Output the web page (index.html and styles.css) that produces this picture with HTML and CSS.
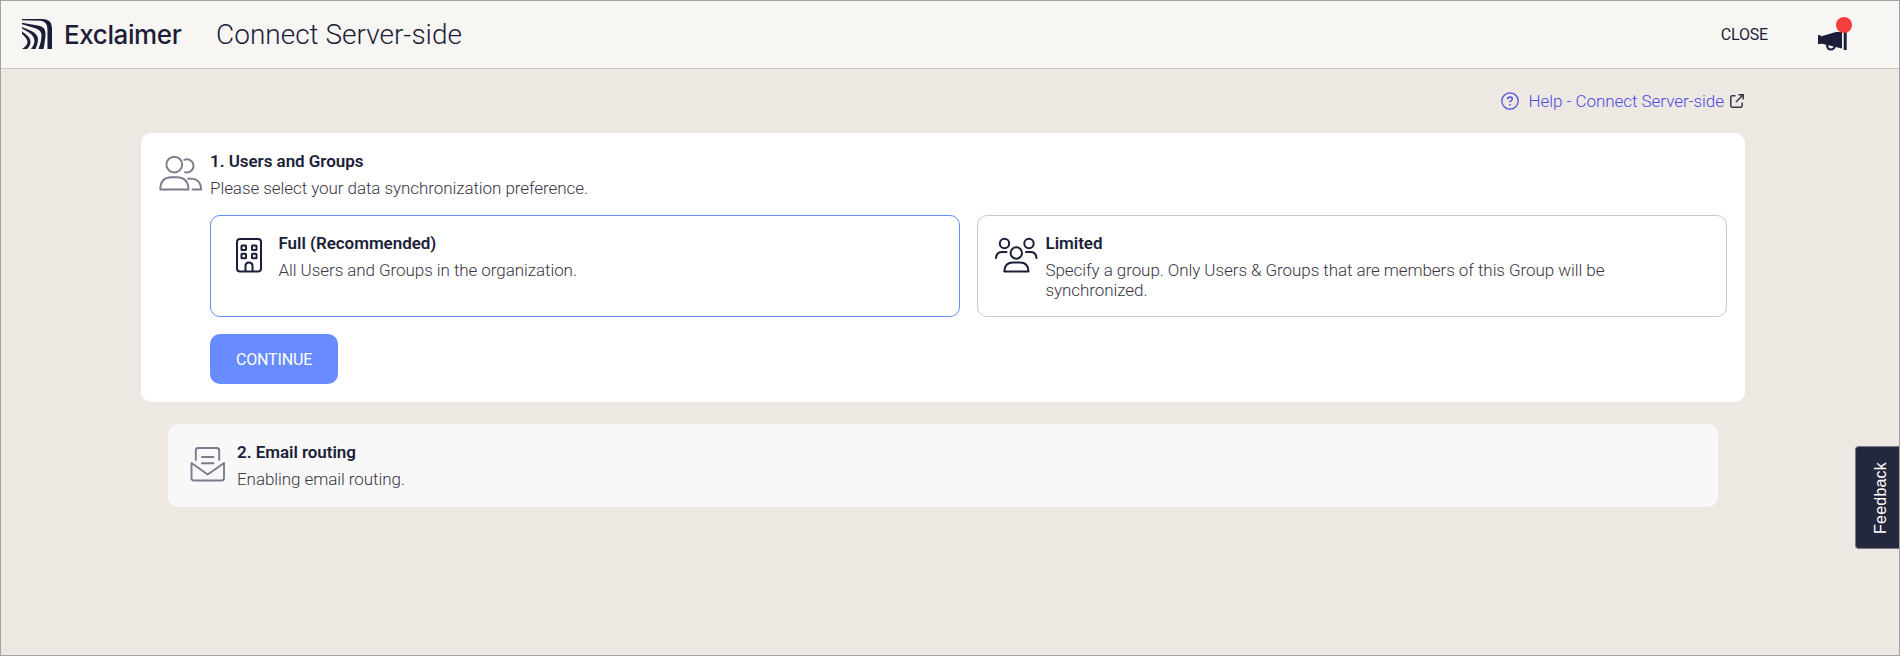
FILE: index.html
```html
<!DOCTYPE html>
<html lang="en">
<head>
<meta charset="utf-8">
<title>Connect Server-side</title>
<link rel="stylesheet" href="styles.css">
</head>
<body>
<div class="app">
  <header class="topbar">
    <svg class="logo-mark" viewBox="0 0 30 30" fill="#1b1e38">
      <path d="M0 0H21Q30 .5 30 9V30H25.500V11Q25.500 2.500 19 1.700L0 1.300Z"/>
      <path d="M0 3.800L17 6.800Q23.500 8.300 23.500 14Q23.500 20 21.500 30H16.500Q19.500 22 19.500 16.500Q19.500 11.500 14 9.500L0 5.200Z"/>
      <path d="M0 8L9.500 12Q16 15.500 16 20.500Q16 24.500 13.500 30H9Q12.500 25.500 12.500 21.500Q12 17 7 13.500L0 9.500Z"/>
      <path d="M0 12.500Q8.500 18 8.500 22.500Q8.500 26.500 5 30H0Q5.500 26.500 5.500 23Q5.500 19.500 0 15Z"/>
    </svg>
    <span class="logo-name">Exclaimer</span>
    <h1 class="title">Connect Server-side</h1>
    <button class="close">CLOSE</button>
    <div class="news">
      <svg class="horn" viewBox="0 0 30 20" fill="#1b1e38">
        <path d="M0 3H2.500V4.500L18 0H24V16.500L3 11.500V12H0Z"/>
        <path d="M9 12.500Q9 17.500 13 17.500Q16.300 17.500 16.700 14" fill="none" stroke="#1b1e38" stroke-width="2.200"/>
        <path d="M25.700 0H28.700V18H25.700Z"/>
      </svg>
      <span class="news-dot"></span>
    </div>
  </header>
  <main class="content">
    <a class="help">
      <svg class="help-mark" viewBox="0 0 18 18" fill="none" stroke="#4b4be0" stroke-width="1.200"><circle cx="9" cy="9" r="8.200"/><path d="M6.600 7.200Q6.600 5 9 5Q11.300 5 11.300 7Q11.300 8.100 10 8.800Q9 9.300 9 10.500M9 12V13.500" stroke-width="1.400"/></svg>
      <span class="help-text">Help - Connect Server-side</span>
      <svg class="external" viewBox="0 0 14 14" fill="none" stroke="#3a3445" stroke-width="1.500"><path d="M5.500 1.700H2.200Q.8 1.700 .8 3V11.800Q.8 13.200 2.200 13.200H10.800Q12.200 13.200 12.200 11.800V8.500M8.500 .8H13.200V5.500M13.200 .8L6 8"/></svg>
    </a>
    <section class="step step-active">
      <svg class="step-icon users" viewBox="0 0 44 36" fill="none" stroke="#7b7b8d" stroke-width="1.900" stroke-linecap="round" stroke-linejoin="round">
        <circle cx="15.300" cy="9.600" r="7.900"/>
        <path d="M25.300 4.800A6.600 6.600 0 1 1 26 17.200"/>
        <path d="M1.300 34.500Q1.100 22.500 12.500 22.200H18Q29.300 22.500 29.500 34.500Z"/>
        <path d="M29.300 23.700Q41.500 22.500 42.200 34.500H33.500"/>
      </svg>
      <div class="step-body">
        <h2 class="heading">1. Users and Groups</h2>
        <p class="text">Please select your data synchronization preference.</p>
        <div class="options">
          <div class="option selected">
            <svg class="option-icon" viewBox="0 0 44 36" fill="none" stroke="#1b1e38" stroke-width="2" stroke-linejoin="round">
              <rect x="10" y="2" width="24" height="32.500" rx="3"/>
              <rect x="14.500" y="8.500" width="4.500" height="4.500" rx=".6"/><rect x="25" y="8.500" width="4.500" height="4.500" rx=".6"/>
              <rect x="14.500" y="16.800" width="4.500" height="4.500" rx=".6"/><rect x="25" y="16.800" width="4.500" height="4.500" rx=".6"/>
              <path d="M18.500 34V29Q18.500 25.500 22 25.500Q25.500 25.500 25.500 29V34"/>
            </svg>
            <div class="option-body">
              <h3 class="heading">Full (Recommended)</h3>
              <p class="text">All Users and Groups in the organization.</p>
            </div>
          </div>
          <div class="option">
            <svg class="option-icon" viewBox="0 0 44 36" fill="none" stroke="#1b1e38" stroke-width="2" stroke-linecap="round" stroke-linejoin="round">
              <circle cx="10.500" cy="6.500" r="4.700"/><circle cx="35" cy="6.500" r="4.700"/><circle cx="22.300" cy="16" r="5.700"/>
              <path d="M2 21Q2.500 15 8 15H12.500M32 15H36.500Q42 15 42.500 21"/>
              <path d="M10.300 34.400Q10.600 25.500 19 25.500H26Q34.200 25.500 34.500 34.400Z"/>
            </svg>
            <div class="option-body">
              <h3 class="heading">Limited</h3>
              <p class="text">Specify a group. Only Users &amp; Groups that are members of this Group will be synchronized.</p>
            </div>
          </div>
        </div>
        <button class="continue">CONTINUE</button>
      </div>
    </section>
    <section class="step step-next">
      <svg class="step-icon mail" viewBox="0 0 36 36" fill="none" stroke="#7b7b8d" stroke-width="1.900" stroke-linecap="round" stroke-linejoin="round">
        <path d="M5.800 14V4.500Q5.800 2 8.300 2H26.700Q29.200 2 29.200 4.500V14M12 11H23.500M12 17.200H23.500"/>
        <path d="M1.500 17V32Q1.500 34.500 4 34.500H31.500Q34 34.500 34 32V17L17.700 28.500Z"/>
      </svg>
      <div class="step-body">
        <h2 class="heading">2. Email routing</h2>
        <p class="text">Enabling email routing.</p>
      </div>
    </section>
  </main>
  <button class="feedback"><span class="feedback-label">Feedback</span></button>
</div>
</body>
</html>
```
FILE: styles.css
```css
* { box-sizing: border-box; }
body { margin: 0; font-family: Roboto, "Liberation Sans", sans-serif; color: #1b1e38; }
h1, h2, h3, p { margin: 0; }
button { border: 0; padding: 0; background: none; font: inherit; color: inherit; }
svg { display: block; flex: none; }
.app { height: 656px; border: 1px solid #a3a1a3; background: #ede8e2; overflow: hidden; }
.topbar { display: flex; align-items: center; height: 68px; padding: 0 47px 0 21px; background: #f8f6f3; border-bottom: 1px solid #c9c8c9; }
.logo-mark { width: 30px; height: 30px; margin-bottom: 1px; }
.logo-name { width: 119px; margin-left: 12px; font: 500 26px/34px Inter, sans-serif; letter-spacing: -0.4px; white-space: nowrap; }
.title { margin-left: 33px; font-size: 28px; line-height: 34px; font-weight: 300; white-space: nowrap; }
.close { margin-left: auto; font-size: 16px; line-height: 20px; letter-spacing: -0.2px; }
.news { position: relative; width: 34px; height: 34px; margin-left: 50px; padding-top: 14px; }
.horn { width: 30px; height: 20px; }
.news-dot { position: absolute; left: 18px; top: -1px; width: 16px; height: 16px; border-radius: 50%; background: #f43e3e; }
.content { width: 1604px; margin-left: 140px; padding-top: 22px; }
.help { display: flex; align-items: center; justify-content: flex-end; height: 20px; padding-right: 1px; color: #4b4be0; }
.help-mark { width: 18px; height: 18px; }
.help-text { margin: 0 6px 0 10px; font-size: 17px; line-height: 20px; font-weight: 300; letter-spacing: -0.04px; }
.external { width: 14px; height: 14px; }
.step { display: flex; border-radius: 10px; }
.step-active { height: 269px; margin-top: 22px; padding: 18px 18px 0 18px; background: #fff; }
.step-next { height: 83px; margin: 22px 27px 0; padding: 18px 18px 0 22px; background: #f8f8f8; }
.users { width: 44px; height: 36px; margin: 4px 7px 0 0; }
.mail { width: 36px; height: 36px; margin: 4px 11px 0 0; }
.step-body { flex: 1; }
.heading { font-size: 17px; line-height: 20px; font-weight: 600; letter-spacing: -0.04px; }
.text { margin-top: 7px; font-size: 17px; line-height: 20px; font-weight: 300; letter-spacing: -0.07px; color: #3b3546; }
.options { display: grid; grid-template-columns: 1fr 1fr; gap: 17px; margin-top: 17px; }
.option { display: flex; gap: 7.5px; height: 102px; padding: 17px 17px 17px 16px; border: 1px solid #c9c9c9; border-radius: 10px; }
.selected { border-color: #668cff; }
.option-icon { width: 44px; height: 36px; margin-top: 4px; }
.option-body { max-width: 600px; }
.continue { display: block; width: 128px; height: 50px; margin-top: 17px; border-radius: 10px; background: #688cff; color: #fff; font-size: 16px; letter-spacing: -0.15px; }
.feedback { position: absolute; right: 1px; top: 446px; width: 44px; height: 103px; display: flex; align-items: center; justify-content: center; border: 1px solid #777888; border-right: 0; border-radius: 4px 0 0 4px; background: #23283d; color: #fff; }
.feedback-label { margin-left: 6px; writing-mode: vertical-rl; transform: rotate(180deg); font: 16px/20px "Liberation Sans", sans-serif; letter-spacing: 0.2px; }
```
